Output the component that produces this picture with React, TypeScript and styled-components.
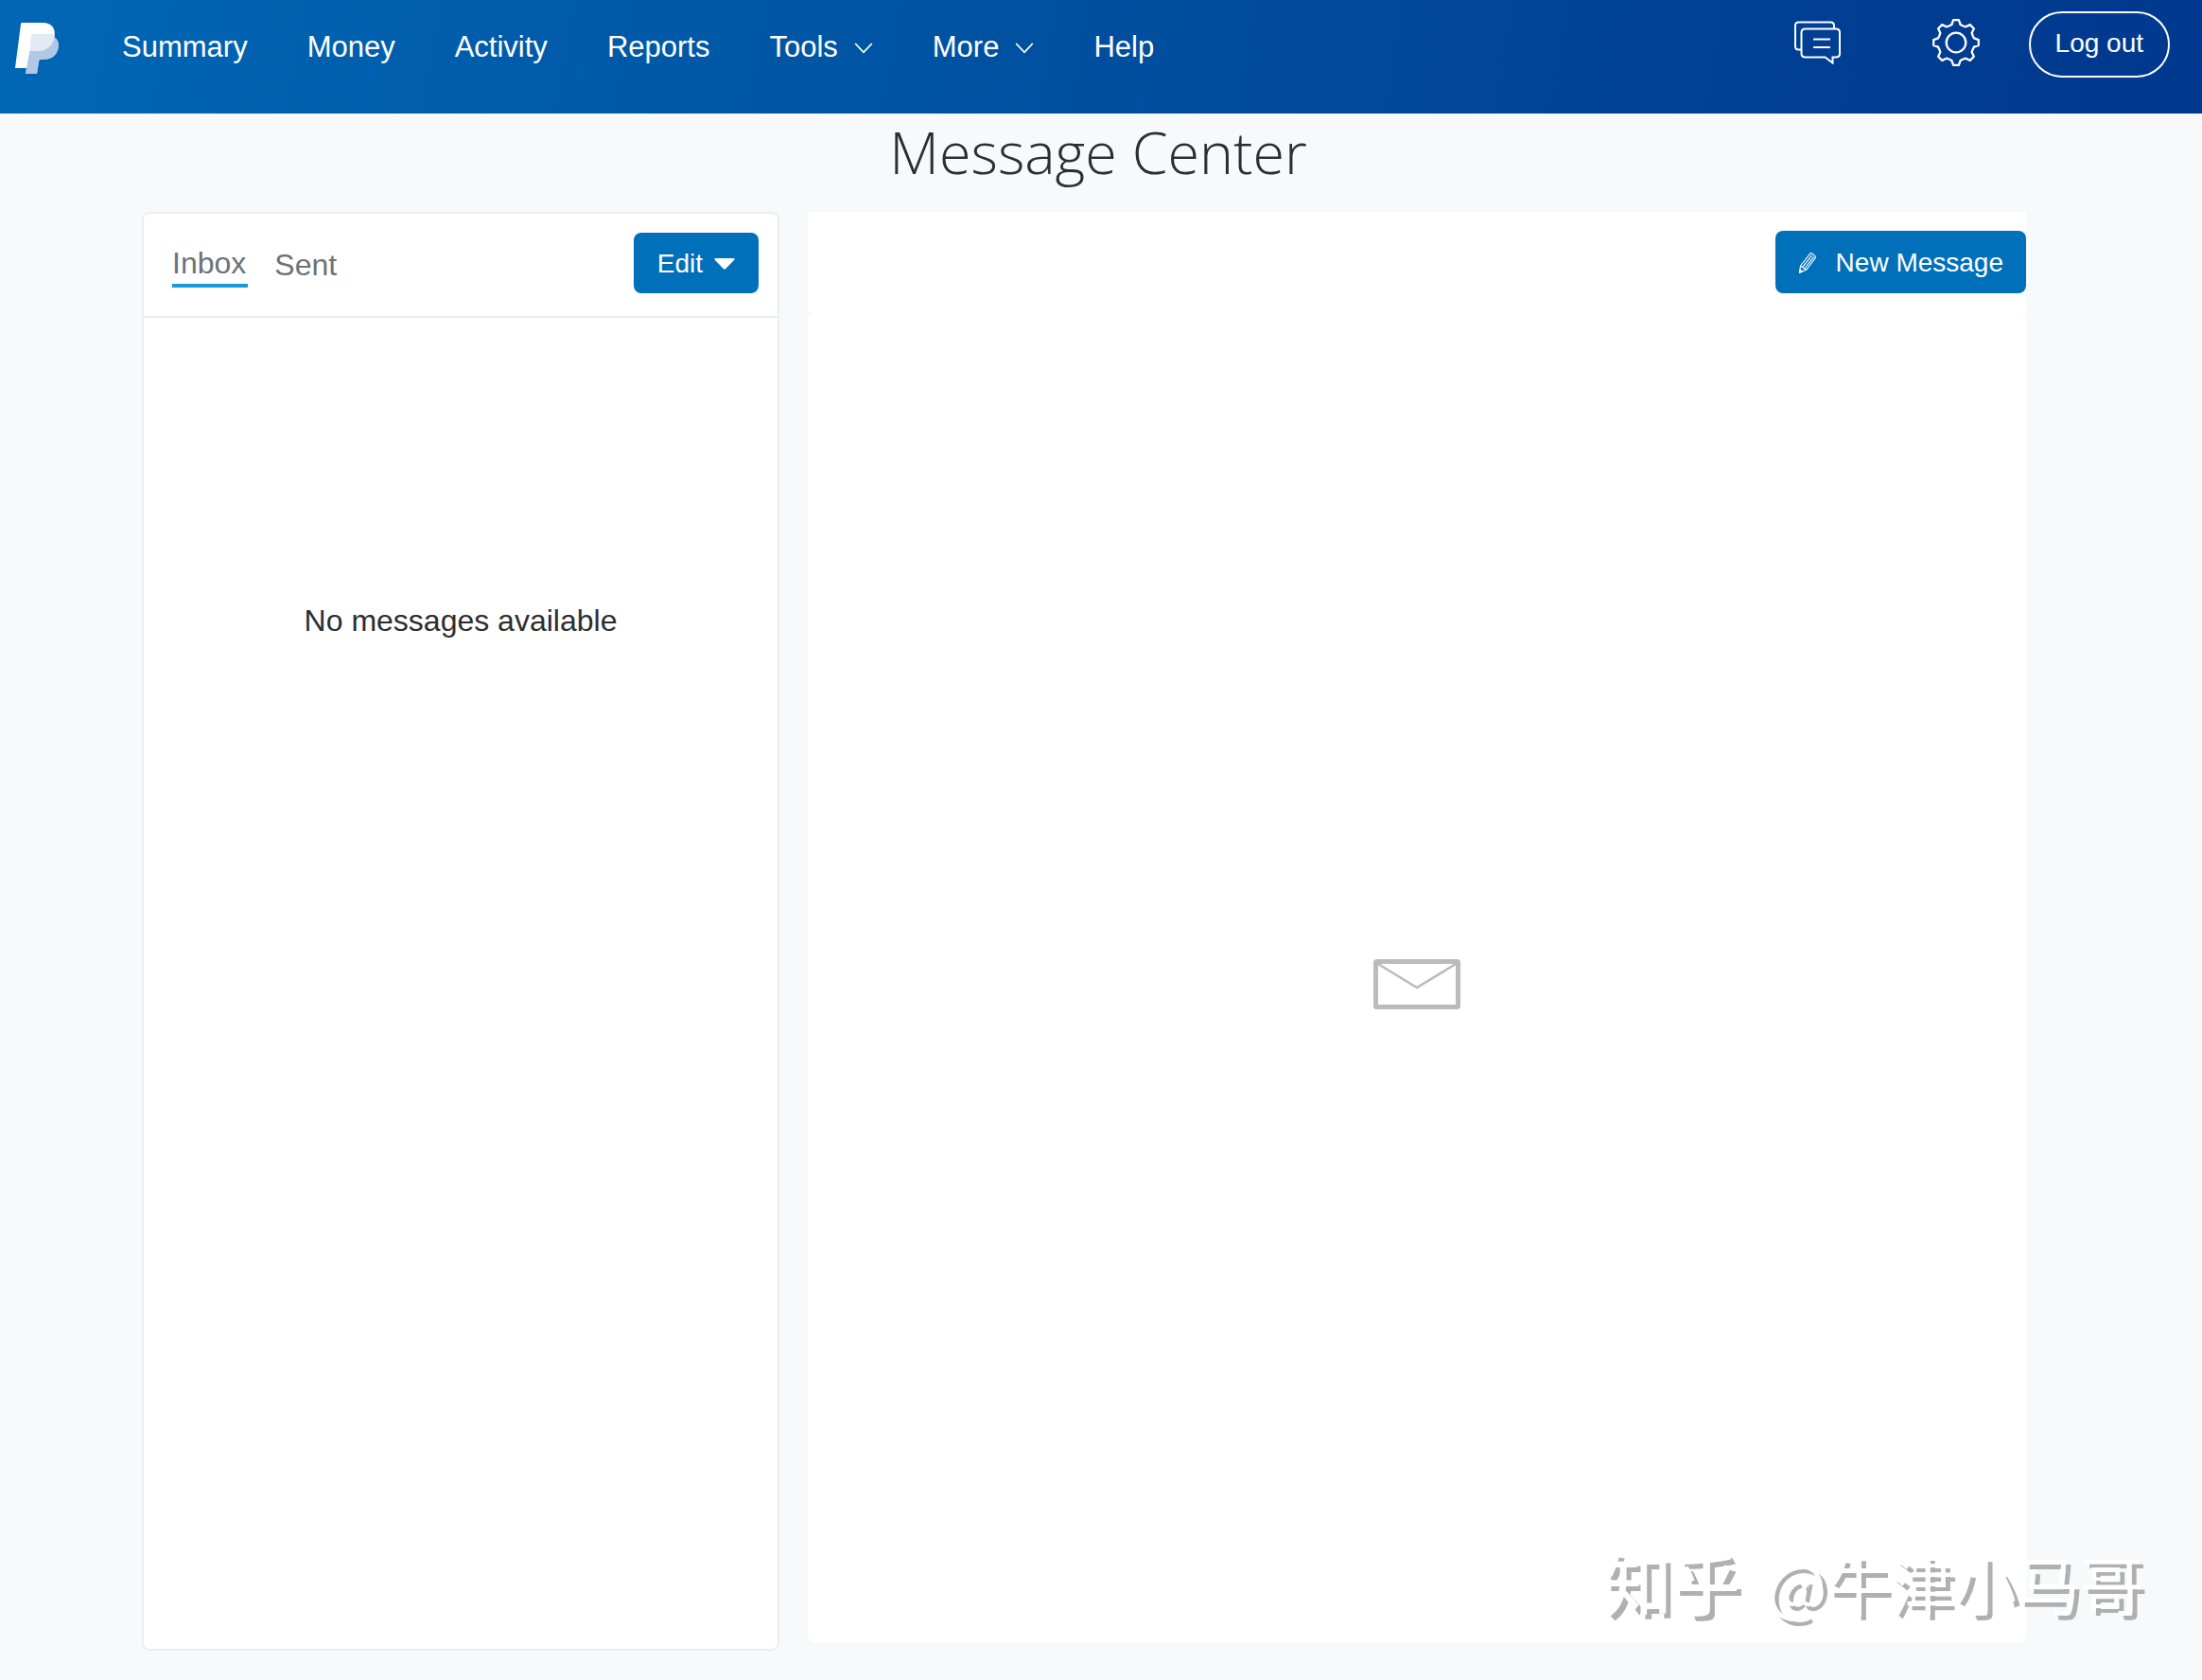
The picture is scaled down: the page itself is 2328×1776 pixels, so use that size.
import React from 'react';
import styled, { createGlobalStyle } from 'styled-components';

const sans = `"Liberation Sans", Arial, Helvetica, sans-serif`;

const GlobalStyle = createGlobalStyle`
  *, *::before, *::after { box-sizing: border-box; }
  body { margin: 0; background: #f7f9fb; color: #2c2e2f; font-family: ${sans}; }
  button { font-family: inherit; cursor: pointer; }
  svg { display: block; flex: none; }
`;

const Page = styled.div`
  position: relative;
  min-height: 100vh;
  display: flex;
  flex-direction: column;
`;

const TopBar = styled.header`
  height: 120px;
  padding: 0 34px 0 16px;
  display: flex;
  align-items: flex-start;
  justify-content: space-between;
  background: linear-gradient(100deg, #0067b5 0%, #0054a3 40%, #003f93 82%, #00388e 100%);
`;

const Primary = styled.nav`
  display: flex;
  align-items: flex-start;
  gap: 66px;
`;

const LogoLink = styled.a`
  display: block;
  padding-top: 24px;
`;

const NavList = styled.ul`
  display: flex;
  gap: 63px;
  margin: 0;
  padding: 32px 0 0;
  list-style: none;
`;

const NavLink = styled.a`
  display: flex;
  align-items: center;
  gap: 17px;
  color: #fff;
  font-size: 31px;
  line-height: 36px;
  text-decoration: none;
`;

const Account = styled.div`
  display: flex;
  align-items: flex-start;
  padding-top: 12px;
`;

const IconButton = styled.button<{ $after: number }>`
  height: 66px;
  margin: 0 ${(p) => p.$after}px 0 0;
  padding: 0;
  border: 0;
  background: none;
  color: #fff;
`;

const LogOut = styled.button`
  height: 70px;
  padding: 0 26px 2px;
  border: 2px solid #fff;
  border-radius: 35px;
  background: none;
  color: #fff;
  font-size: 28px;
`;

const Title = styled.h1`
  margin: 0;
  padding-right: 6px;
  font-family: "Open Sans", "Noto Sans", sans-serif;
  font-size: 61px;
  font-weight: 300;
  line-height: 82px;
  text-align: center;
  height: 104px;
`;

const Columns = styled.main`
  flex: 1;
  display: grid;
  grid-template-columns: 674fr 1288fr;
  gap: 30px;
  padding: 0 186px 31px 150px;
`;

const Inbox = styled.section`
  display: flex;
  flex-direction: column;
  border: 2px solid #edeeef;
  border-radius: 8px;
  background: #fff;
`;

const InboxHead = styled.div`
  display: flex;
  align-items: flex-start;
  justify-content: space-between;
  height: 110px;
  padding: 20px 20px 0 30px;
  border-bottom: 2px solid #edeeef;
`;

const Tabs = styled.div`
  display: flex;
  align-items: flex-start;
  gap: 28px;
  padding-top: 13px;
`;

const Tab = styled.button<{ $active?: boolean }>`
  padding: ${(p) => (p.$active ? 0 : 2)}px 2px 3px 0;
  border: 0;
  border-bottom: 4px solid ${(p) => (p.$active ? '#159bd7' : 'transparent')};
  background: none;
  color: #6c7378;
  font-size: 32px;
  line-height: 38px;
`;

const BlueButton = styled.button<{ $height: number; $gap: number; $pad: number }>`
  display: flex;
  align-items: center;
  gap: ${(p) => p.$gap}px;
  height: ${(p) => p.$height}px;
  padding: 1px ${(p) => p.$pad}px 0;
  border: 0;
  border-radius: 8px;
  background: #0070ba;
  color: #fff;
  font-size: 28px;
`;

const Empty = styled.p`
  margin: 0;
  padding-top: 300px;
  font-size: 32px;
  line-height: 40px;
  text-align: center;
`;

const Reader = styled.section`
  display: flex;
  flex-direction: column;
  margin-bottom: 8px;
`;

const ReaderHead = styled.div`
  display: flex;
  align-items: flex-start;
  justify-content: flex-end;
  height: 106px;
  padding-top: 20px;
  background: #fff;
`;

const ReaderBody = styled.div`
  flex: 1;
  display: flex;
  align-items: center;
  justify-content: center;
  padding-top: 14px;
  border-radius: 8px;
  background: #fff;
`;

const Watermark = styled.div`
  position: absolute;
  right: 62px;
  bottom: 55px;
  display: flex;
  align-items: baseline;
  gap: 28px;
  color: #fff;
  font-family: "Noto Sans CJK SC", sans-serif;
  font-size: 67px;
  line-height: 96px;
  text-shadow: 5px 5px 0 #b0b0b0;
  pointer-events: none;
`;

const Brand = styled.span`
  font-size: 72px;
  font-weight: 500;
`;

const Logo = () => (
  <svg width="47" height="54" viewBox="0 0 47 54" role="img" aria-label="PayPal">
    <path fill="#b4cfea" d="M41 15c4 3 5.5 7 4.600 12C43.500 36 37 39 28.500 39H27q-1.500 0-1.800 1.500L23 54H11l6-39z" />
    <path fill="#fff" d="M7 0H29c9 0 14 5.500 12.600 14C40 25 32 30 23 30h-6q-1.500 0-1.800 1.500L12.500 48H0L6 1.500Q6.200 0 7 0z" />
    <path fill="#b0c7e6" d="M15.500 30H24c9 0 16-5 17.500-15 4 3 5.200 7 4.100 12C43.500 36 37 39 28.500 39H27q-1.500 0-1.800 1.500L23 54H11z" />
    <path fill="#e3eaf5" d="M18 12H41.600C41.700 24 33 30 24 30h-8.500L17 13.500Q17.200 12 18 12z" />
  </svg>
);

const Chevron = () => (
  <svg width="20" height="14" viewBox="0 0 20 14" fill="none" stroke="currentColor" strokeWidth="1.800" aria-hidden="true">
    <path d="M1.200 3 10 12.300 18.800 3" />
  </svg>
);

const ChatIcon = () => (
  <svg width="49" height="46" viewBox="0 0 49 46" fill="none" stroke="currentColor" strokeWidth="2" aria-hidden="true">
    <path d="M7 30.500H4.500Q1 30.500 1 27V5Q1 1.500 4.500 1.500H38.500Q42 1.500 42 5V8" />
    <path d="M11.500 8.500H44Q48 8.500 48 12.500V34.500Q48 38.500 44 38.500H40.500V44.500L32.500 38.500H11.500Q7.500 38.500 7.500 34.500V12.500Q7.500 8.500 11.500 8.500zM20 19.500H38M20 28H38" />
  </svg>
);

// One tooth of the gear, from its left root to its right root; eight turns close the ring.
const gearPath = () => {
  const tooth = [[-7, -17.800], [-4.600, -19], [-2.900, -23.800], [2.900, -23.800], [4.600, -19], [7, -17.800]];
  const points: string[] = [];
  for (let i = 0; i < 8; i++) {
    const a = (i * Math.PI) / 4;
    tooth.forEach(([x, y]) => {
      const px = 25 + x * Math.cos(a) - y * Math.sin(a);
      const py = 25 + x * Math.sin(a) + y * Math.cos(a);
      points.push(`${px.toFixed(1)} ${py.toFixed(1)}`);
    });
  }
  return `M${points.join('L')}Z`;
};

const GearIcon = () => (
  <svg width="50" height="50" viewBox="0 0 50 50" fill="none" stroke="currentColor" strokeWidth="2.300" strokeLinejoin="round" aria-hidden="true">
    <path d={gearPath()} />
    <circle cx="25" cy="25" r="10.300" />
  </svg>
);

const Caret = () => (
  <svg width="22" height="12" viewBox="0 0 22 12" fill="currentColor" aria-hidden="true">
    <path d="M1.500 0h19q1.800.3.800 1.800L12.300 11q-1.300 1.300-2.600 0L.7 1.800Q-.3.3 1.500 0z" />
  </svg>
);

const Pencil = () => (
  <svg width="20" height="24" viewBox="0 0 20 24" fill="none" stroke="currentColor" strokeWidth="1.100" strokeLinejoin="round" aria-hidden="true">
    <path d="M2.500 15 12.500 2.300Q13.500 1.200 14.700 2L18 4.600Q19 5.500 18.200 6.700L8.500 19.300 1.500 22.300zM2.500 15 8.500 19.300M5 15.800 14.600 3.800M7 17.500 16.600 5.300" />
    <path fill="currentColor" d="m1.500 22.300.4-3.300 2.600 2z" />
  </svg>
);

const Envelope = () => (
  <svg width="92" height="53" viewBox="0 0 92 53" fill="none" stroke="#bbb" role="img" aria-label="No message selected">
    <rect x="2.500" y="2.500" width="87" height="48" rx="1" strokeWidth="5" />
    <path d="M4 4.500 46 30 88 4.500" strokeWidth="2.500" />
  </svg>
);

const links: { label: string; menu?: boolean }[] = [
  { label: 'Summary' },
  { label: 'Money' },
  { label: 'Activity' },
  { label: 'Reports' },
  { label: 'Tools', menu: true },
  { label: 'More', menu: true },
  { label: 'Help' },
];

export default function App() {
  return (
    <Page>
      <GlobalStyle />
      <TopBar>
        <Primary aria-label="Main">
          <LogoLink href="#home"><Logo /></LogoLink>
          <NavList>
            {links.map(({ label, menu }) => (
              <li key={label}>
                <NavLink href={`#${label.toLowerCase()}`}>
                  {label}
                  {menu && <Chevron />}
                </NavLink>
              </li>
            ))}
          </NavList>
        </Primary>
        <Account>
          <IconButton $after={97} aria-label="Messages"><ChatIcon /></IconButton>
          <IconButton $after={52} aria-label="Settings"><GearIcon /></IconButton>
          <LogOut>Log out</LogOut>
        </Account>
      </TopBar>
      <Title>Message Center</Title>
      <Columns>
        <Inbox>
          <InboxHead>
            <Tabs role="tablist">
              <Tab $active role="tab" aria-selected="true">Inbox</Tab>
              <Tab role="tab" aria-selected="false">Sent</Tab>
            </Tabs>
            <BlueButton $height={64} $gap={12} $pad={25}>Edit<Caret /></BlueButton>
          </InboxHead>
          <Empty>No messages available</Empty>
        </Inbox>
        <Reader>
          <ReaderHead>
            <BlueButton $height={66} $gap={20} $pad={24}><Pencil />New Message</BlueButton>
          </ReaderHead>
          <ReaderBody><Envelope /></ReaderBody>
        </Reader>
      </Columns>
      <Watermark>
        <Brand>知乎</Brand>
        <span>@牛津小马哥</span>
      </Watermark>
    </Page>
  );
}
